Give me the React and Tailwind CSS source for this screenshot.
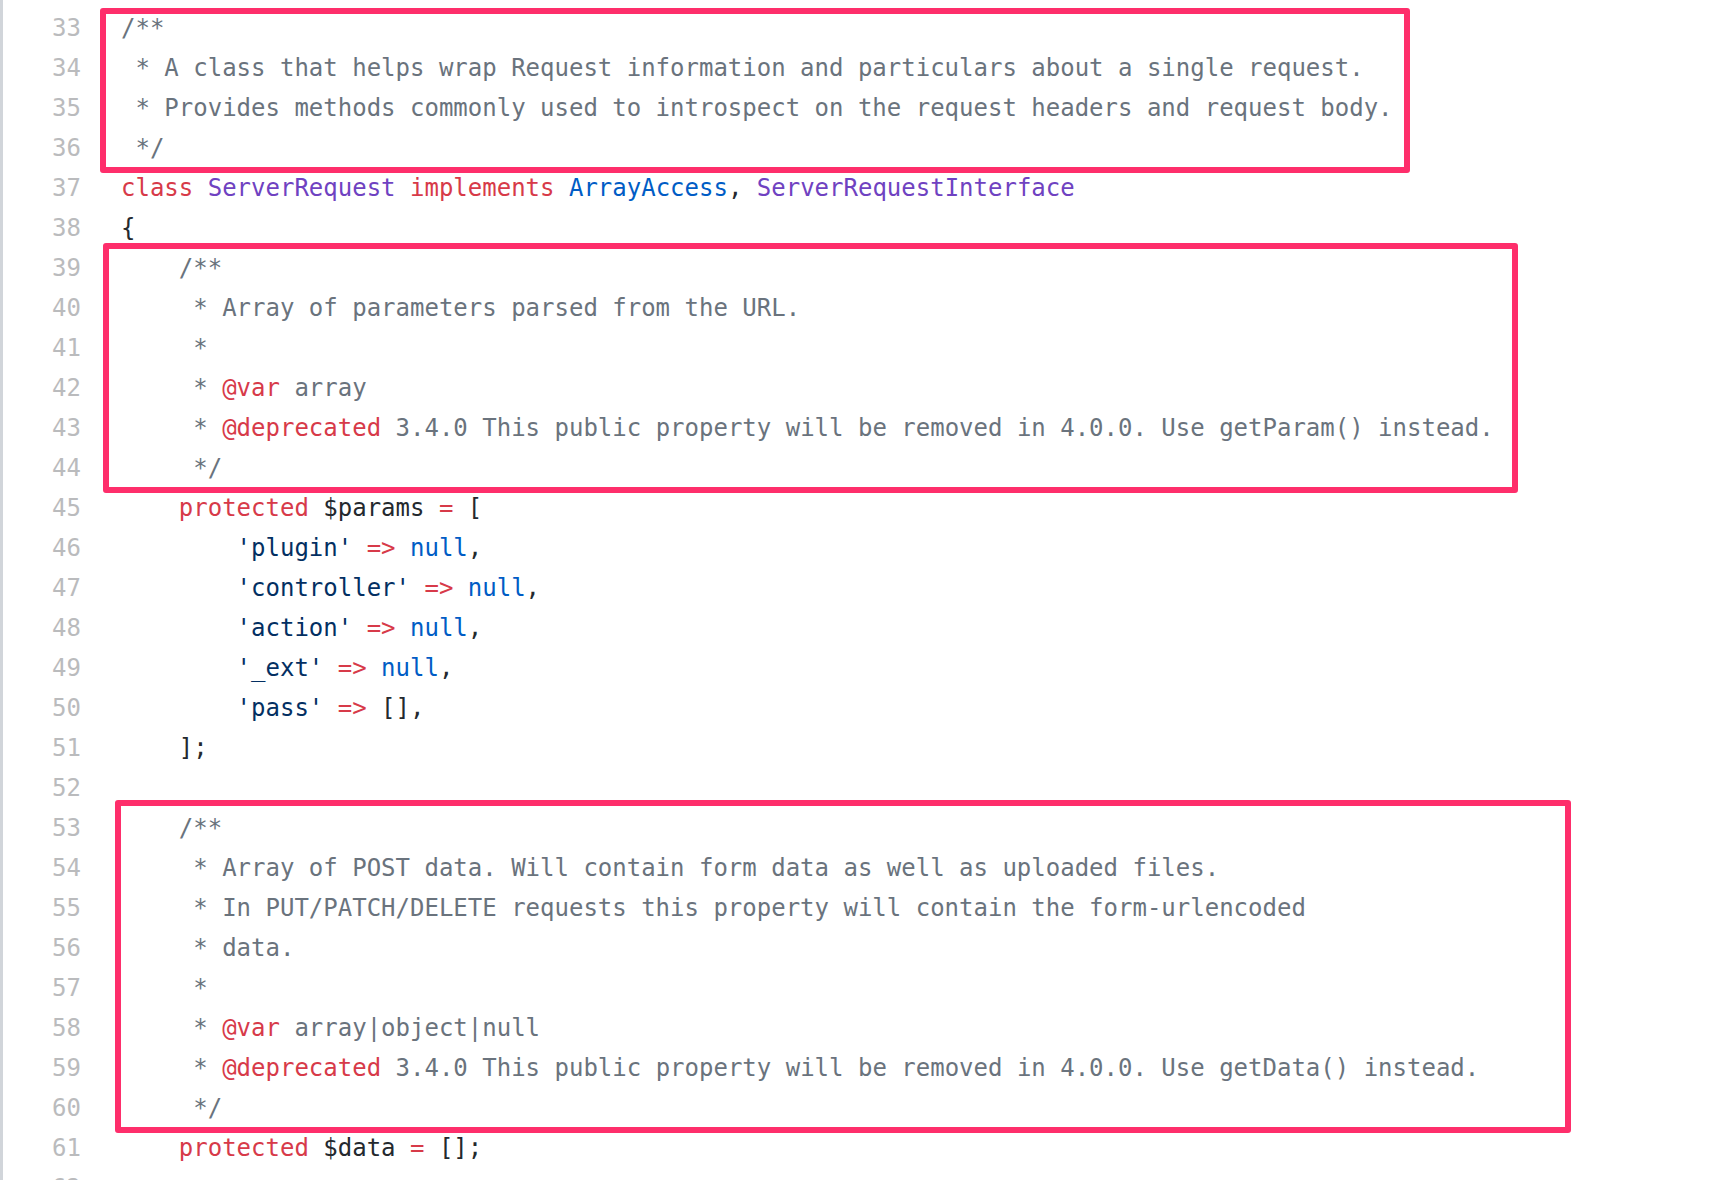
import React from "react";

const C = "text-[#6a737d]";
const K = "text-[#d73a49]";
const P = "text-[#6f42c1]";
const B = "text-[#005cc5]";
const S = "text-[#032f62]";
const D = "text-[#24292e]";

const lines = [
  [[C, "/**"]],
  [[C, " * A class that helps wrap Request information and particulars about a single request."]],
  [[C, " * Provides methods commonly used to introspect on the request headers and request body."]],
  [[C, " */"]],
  [[K, "class"], [D, " "], [P, "ServerRequest"], [D, " "], [K, "implements"], [D, " "], [B, "ArrayAccess"], [D, ", "], [P, "ServerRequestInterface"]],
  [[D, "{"]],
  [[C, "    /**"]],
  [[C, "     * Array of parameters parsed from the URL."]],
  [[C, "     *"]],
  [[C, "     * "], [K, "@var"], [C, " array"]],
  [[C, "     * "], [K, "@deprecated"], [C, " 3.4.0 This public property will be removed in 4.0.0. Use getParam() instead."]],
  [[C, "     */"]],
  [[D, "    "], [K, "protected"], [D, " $params "], [K, "="], [D, " ["]],
  [[D, "        "], [S, "'plugin'"], [D, " "], [K, "=>"], [D, " "], [B, "null"], [D, ","]],
  [[D, "        "], [S, "'controller'"], [D, " "], [K, "=>"], [D, " "], [B, "null"], [D, ","]],
  [[D, "        "], [S, "'action'"], [D, " "], [K, "=>"], [D, " "], [B, "null"], [D, ","]],
  [[D, "        "], [S, "'_ext'"], [D, " "], [K, "=>"], [D, " "], [B, "null"], [D, ","]],
  [[D, "        "], [S, "'pass'"], [D, " "], [K, "=>"], [D, " [],"]],
  [[D, "    ];"]],
  [[D, ""]],
  [[C, "    /**"]],
  [[C, "     * Array of POST data. Will contain form data as well as uploaded files."]],
  [[C, "     * In PUT/PATCH/DELETE requests this property will contain the form-urlencoded"]],
  [[C, "     * data."]],
  [[C, "     *"]],
  [[C, "     * "], [K, "@var"], [C, " array|object|null"]],
  [[C, "     * "], [K, "@deprecated"], [C, " 3.4.0 This public property will be removed in 4.0.0. Use getData() instead."]],
  [[C, "     */"]],
  [[D, "    "], [K, "protected"], [D, " $data "], [K, "="], [D, " [];"]],
  [[D, ""]],
];

export default function App() {
  return (
    <div className="relative w-[1714px] h-[1180px] overflow-hidden bg-white">
      <div
        className="h-full border-l-[3px] border-[#d1d5da] pt-[8px] text-[24px] leading-[40px]"
        style={{ fontFamily: '"DejaVu Sans Mono", "Liberation Mono", monospace' }}
      >
        {lines.map((toks, i) => (
          <div key={i} className="flex h-[40px]">
            <div className="w-[98px] shrink-0 pr-[20px] text-right text-[#babbbd]">{33 + i}</div>
            <div className="pl-[20px] whitespace-pre">
              {toks.map(([cls, t], j) => (
                <span key={j} className={cls}>{t}</span>
              ))}
            </div>
          </div>
        ))}
      </div>
      <div className="absolute left-[100px] top-[8px] w-[1310px] h-[165px] border-[6px] border-[#fe2e6b] rounded-[3px]" />
      <div className="absolute left-[103px] top-[243px] w-[1415px] h-[250px] border-[6px] border-[#fe2e6b] rounded-[3px]" />
      <div className="absolute left-[115px] top-[800px] w-[1456px] h-[333px] border-[6px] border-[#fe2e6b] rounded-[3px]" />
    </div>
  );
}
